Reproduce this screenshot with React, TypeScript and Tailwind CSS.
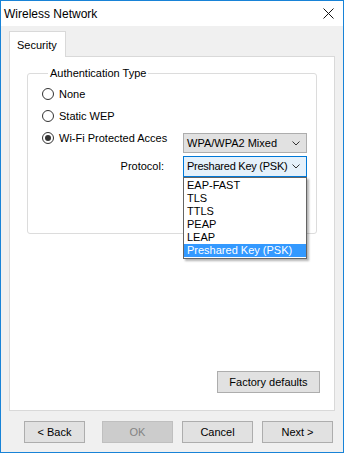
import React from 'react';

const font = { fontFamily: '"Liberation Sans", Arial, sans-serif' };

function Chevron() {
  return (
    <svg width="8" height="5" viewBox="0 0 8 5" className="shrink-0">
      <path d="M0.5 0.5 L4 4 L7.5 0.5" fill="none" stroke="#333" strokeWidth="1" />
    </svg>
  );
}

function Radio({ label, checked }: { label: string; checked?: boolean }) {
  return (
    <div className="flex h-[22px] items-center">
      <span className="flex h-[12px] w-[12px] items-center justify-center rounded-full border border-[#333] bg-white">
        {checked && <span className="h-[6px] w-[6px] rounded-full bg-[#333]" />}
      </span>
      <span className="ml-[5px] whitespace-nowrap">{label}</span>
    </div>
  );
}

function Button({ label, width, disabled }: { label: string; width: string; disabled?: boolean }) {
  return (
    <div
      className={
        'flex h-[22px] items-center justify-center border ' +
        width +
        (disabled
          ? ' border-[#bfbfbf] bg-[#cccccc] text-[#838383]'
          : ' border-[#adadad] bg-[#e1e1e1] text-black')
      }
    >
      {label}
    </div>
  );
}

const protocols = ['EAP-FAST', 'TLS', 'TTLS', 'PEAP', 'LEAP', 'Preshared Key (PSK)'];

export default function App() {
  return (
    <div
      style={font}
      className="flex h-[453px] w-[344px] flex-col border border-[#1883d7] bg-[#f0f0f0] text-[11px] text-black"
    >
      {/* Title bar */}
      <div className="flex h-[25px] items-center justify-between bg-white pl-[3px] pr-[9px]">
        <span className="text-[12px]">Wireless Network</span>
        <svg width="11" height="11" viewBox="0 0 11 11">
          <path d="M0.5 0.5 L10.5 10.5 M10.5 0.5 L0.5 10.5" stroke="#111" strokeWidth="1" />
        </svg>
      </div>

      {/* Tabs */}
      <div className="pl-[8px] pr-[8px] pt-[5px]">
        <div className="relative z-10 -mb-px flex h-[26px] w-[57px] items-center border border-b-0 border-[#d9d9d9] bg-white pl-[7px] pt-[2px]">
          Security
        </div>
        <div className="flex h-[355px] flex-col border border-[#d9d9d9] bg-white">
          <fieldset className="mx-[17px] mt-[10px] rounded-[3px] border border-[#dcdcdc] pb-[56px] pl-[14px] pr-[7px]">
            <legend className="ml-[6px] px-[2px] leading-[13px]">Authentication Type</legend>
            <div className="pt-[3px]">
              <Radio label="None" />
              <Radio label="Static WEP" />
              <div className="flex">
                <div className="w-[141px]">
                  <Radio label="Wi-Fi Protected Acces" checked />
                </div>
                <div className="mt-[6px] flex h-[20px] w-[124px] items-center justify-between border border-[#adadad] bg-[#e1e1e1] pl-[3px] pr-[6px]">
                  <span className="whitespace-nowrap">WPA/WPA2 Mixed</span>
                  <Chevron />
                </div>
              </div>
              <div className="mt-[3px] flex">
                <div className="flex w-[141px] items-center justify-end pr-[19px]">Protocol:</div>
                <div className="relative w-[124px]">
                  <div className="flex h-[21px] items-center justify-between border border-[#0078d7] bg-[#e5f1fb] pl-[3px] pr-[6px]">
                    <span className="whitespace-nowrap tracking-[-0.25px]">Preshared Key (PSK)</span>
                    <Chevron />
                  </div>
                  <div className="absolute left-0 top-[21px] z-20 w-[124px] border border-[#646464] bg-white py-px shadow-[2px_2px_2px_rgba(0,0,0,0.3)]">
                    {protocols.map((p) => (
                      <div
                        key={p}
                        className={
                          'flex h-[13px] items-center whitespace-nowrap pl-[3px] leading-[13px] ' +
                          (p === 'Preshared Key (PSK)' ? 'bg-[#3399ff] text-white' : '')
                        }
                      >
                        {p}
                      </div>
                    ))}
                  </div>
                </div>
              </div>
            </div>
          </fieldset>

          <div className="mt-auto mb-[17px] mr-[14px] self-end">
            <Button label="Factory defaults" width="w-[103px]" />
          </div>
        </div>
      </div>

      {/* Bottom buttons */}
      <div className="flex pl-[23px] pt-[10px]">
        <Button label="< Back" width="w-[61px]" />
        <div className="ml-[17px] flex gap-[9px]">
          <Button label="OK" width="w-[71px]" disabled />
          <Button label="Cancel" width="w-[71px]" />
          <Button label="Next >" width="w-[71px]" />
        </div>
      </div>
    </div>
  );
}
